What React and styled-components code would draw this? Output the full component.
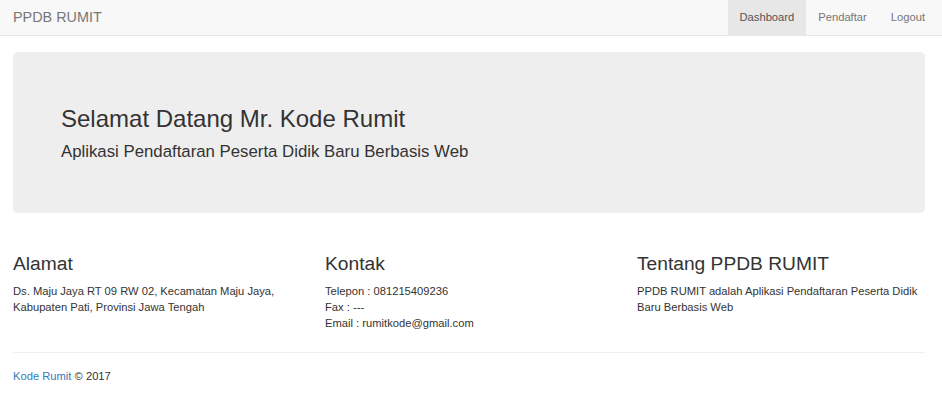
import React from "react";
import styled, { createGlobalStyle } from "styled-components";

const GlobalStyle = createGlobalStyle`
  html, body {
    margin: 0;
    padding: 0;
    background: #fff;
  }
  body {
    font-family: "Liberation Sans", Arial, Helvetica, sans-serif;
    font-size: 11.2px;
    line-height: 1.42857;
    color: #333;
  }
  * {
    box-sizing: border-box;
  }
`;

const Navbar = styled.nav`
  display: flex;
  justify-content: space-between;
  align-items: stretch;
  height: 36px;
  background-color: #f8f8f8;
  border-bottom: 1px solid #e7e7e7;
  padding: 0 5px 0 13px;
  margin-bottom: 16px;
`;

const Brand = styled.a`
  font-size: 14.4px;
  line-height: 34px;
  color: #777;
  text-decoration: none;
`;

const NavList = styled.ul`
  display: flex;
  list-style: none;
  margin: 0;
  padding: 0;
`;

const NavLink = styled.a`
  display: block;
  height: 35px;
  line-height: 35px;
  padding: 0 12px;
  font-size: 11.2px;
  text-decoration: none;
  color: ${(props) => (props.active ? "#555" : "#777")};
  background-color: ${(props) => (props.active ? "#e7e7e7" : "transparent")};
`;

const Container = styled.div`
  padding: 0 17px 0 13px;
`;

const Jumbotron = styled.div`
  background-color: #eee;
  border-radius: 5px;
  padding: 38px 48px 37px;
  margin-bottom: 24px;
`;

const JumboTitle = styled.h3`
  font-size: 24px;
  font-weight: 500;
  line-height: 1.1;
  margin: 16px 0 8px;
  color: #333;
`;

const JumboText = styled.p`
  font-size: 16.8px;
  line-height: 24px;
  margin: 0 0 12px;
`;

const Row = styled.div`
  display: grid;
  grid-template-columns: repeat(3, 1fr);
  column-gap: 24px;
`;

const Column = styled.div``;

const Heading = styled.h3`
  font-size: 19.2px;
  font-weight: 500;
  line-height: 1.1;
  margin: 16px 0 8px;
`;

const Text = styled.p`
  margin: 0 0 8px;
`;

const Divider = styled.hr`
  border: 0;
  border-top: 1px solid #eee;
  margin: 13px 0 15px;
`;

const Footer = styled.footer`
  p {
    margin: 0 0 8px;
  }
`;

const Link = styled.a`
  color: #337ab7;
  text-decoration: none;
`;

export default function App() {
  return (
    <>
      <GlobalStyle />
      <Navbar>
        <Brand href="#">PPDB RUMIT</Brand>
        <NavList>
          <li>
            <NavLink href="#" active>
              Dashboard
            </NavLink>
          </li>
          <li>
            <NavLink href="#">Pendaftar</NavLink>
          </li>
          <li>
            <NavLink href="#">Logout</NavLink>
          </li>
        </NavList>
      </Navbar>

      <Container>
        <Jumbotron>
          <JumboTitle>Selamat Datang Mr. Kode Rumit</JumboTitle>
          <JumboText>Aplikasi Pendaftaran Peserta Didik Baru Berbasis Web</JumboText>
        </Jumbotron>

        <Row>
          <Column>
            <Heading>Alamat</Heading>
            <Text>
              Ds. Maju Jaya RT 09 RW 02, Kecamatan Maju Jaya, Kabupaten Pati,
              Provinsi Jawa Tengah
            </Text>
          </Column>
          <Column>
            <Heading>Kontak</Heading>
            <Text>
              Telepon : 081215409236
              <br />
              Fax : ---
              <br />
              Email : rumitkode@gmail.com
            </Text>
          </Column>
          <Column>
            <Heading>Tentang PPDB RUMIT</Heading>
            <Text>
              PPDB RUMIT adalah Aplikasi Pendaftaran Peserta Didik Baru Berbasis
              Web
            </Text>
          </Column>
        </Row>

        <Divider />
        <Footer>
          <p>
            <Link href="#">Kode Rumit</Link> © 2017
          </p>
        </Footer>
      </Container>
    </>
  );
}
